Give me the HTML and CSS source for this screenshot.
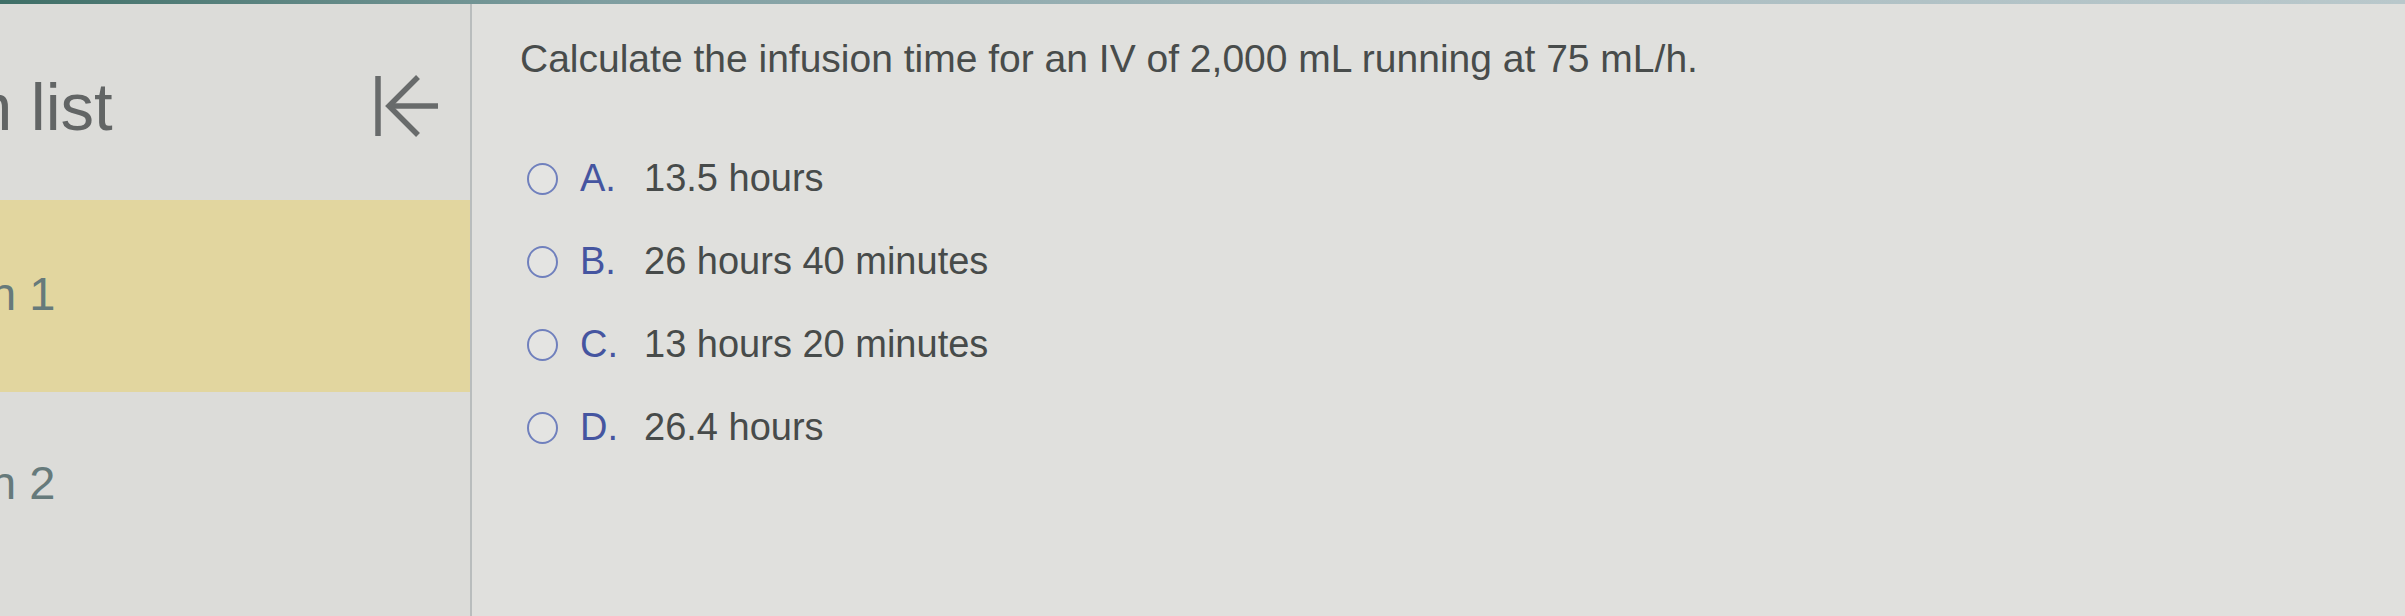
FILE: index.html
```html
<!DOCTYPE html>
<html lang="en">
<head>
<meta charset="utf-8">
<title>Question</title>
<link rel="stylesheet" href="styles.css">
</head>
<body>
<div class="topbar"></div>
<div class="layout">
  <aside class="sidebar">
    <div class="side-head">
      <h2 class="side-title">Question list</h2>
      <button class="collapse" aria-label="Collapse question list">
        <svg width="64" height="62" viewBox="0 0 64 62" fill="none" stroke="#686b6b" stroke-width="5.5">
          <line x1="4" y1="1" x2="4" y2="61"/>
          <polyline points="44,2 15,31 44,60"/>
          <line x1="15" y1="31" x2="64" y2="31"/>
        </svg>
      </button>
    </div>
    <div class="side-item current"><span class="side-label">Question 1</span></div>
    <div class="side-item"><span class="side-label">Question 2</span></div>
  </aside>
  <main class="main">
    <p class="question">Calculate the infusion time for an IV of 2,000 mL running at 75 mL/h.</p>
    <ul class="options">
      <li class="option"><span class="radio"></span><span class="letter">A.</span><span class="answer">13.5 hours</span></li>
      <li class="option"><span class="radio"></span><span class="letter">B.</span><span class="answer">26 hours 40 minutes</span></li>
      <li class="option"><span class="radio"></span><span class="letter">C.</span><span class="answer">13 hours 20 minutes</span></li>
      <li class="option"><span class="radio"></span><span class="letter">D.</span><span class="answer">26.4 hours</span></li>
    </ul>
  </main>
</div>
</body>
</html>
```
FILE: styles.css
```css
* { box-sizing: border-box; }
html, body {
  margin: 0;
  padding: 0;
  width: 2405px;
  height: 616px;
  overflow: hidden;
}
body {
  background: #dfdfdc;
  font-family: "Liberation Sans", Arial, sans-serif;
  display: flex;
  flex-direction: column;
}
.topbar {
  height: 4px;
  flex: 0 0 4px;
  background: linear-gradient(to right, #3f6f67 0%, #7f9ea0 25%, #a9bcc0 60%, #b9c8cb 100%);
}
.layout {
  flex: 1;
  display: flex;
}
.sidebar {
  width: 472px;
  flex: 0 0 472px;
  background: #dcdcd9;
  border-right: 2px solid #b9bdbd;
  overflow: hidden;
}
.side-head {
  height: 196px;
  display: flex;
  align-items: center;
  justify-content: space-between;
}
.side-title {
  margin: 0 0 0 -256px;
  padding-top: 8px;
  font-size: 67px;
  line-height: 67px;
  font-weight: normal;
  color: #626565;
  white-space: nowrap;
}
.collapse {
  margin: 8px 32px 0 0;
  padding: 0;
  border: 0;
  background: none;
  display: flex;
}
.side-item {
  height: 192px;
  display: flex;
  align-items: center;
  overflow: hidden;
}
.side-item.current {
  background: #e2d69f;
}
.side-label {
  margin-left: -172px;
  font-size: 47px;
  line-height: 47px;
  color: #667a7b;
  white-space: nowrap;
}
.side-item.current .side-label { margin-top: -6px; }
.side-item:not(.current) .side-label { margin-top: -12px; }
.main {
  flex: 1;
  background: #e0e0dd;
  padding: 32px 0 0 48px;
}
.question {
  margin: 0;
  font-size: 39px;
  line-height: 45px;
  color: #484c4b;
  white-space: nowrap;
}
.options {
  list-style: none;
  margin: 75px 0 0 7px;
  padding: 0;
  display: flex;
  flex-direction: column;
  gap: 38px;
}
.option {
  height: 45px;
  display: flex;
  align-items: center;
  font-size: 38px;
  line-height: 45px;
  color: #474b4a;
  white-space: nowrap;
}
.radio {
  width: 31px;
  height: 32px;
  border: 2.5px solid #7080bd;
  border-radius: 50%;
  background: #e4e4e2;
  flex: 0 0 auto;
  margin-right: 22px;
}
.letter {
  width: 64px;
  color: #4555a0;
}
.answer {
  color: #474b4a;
}
```
